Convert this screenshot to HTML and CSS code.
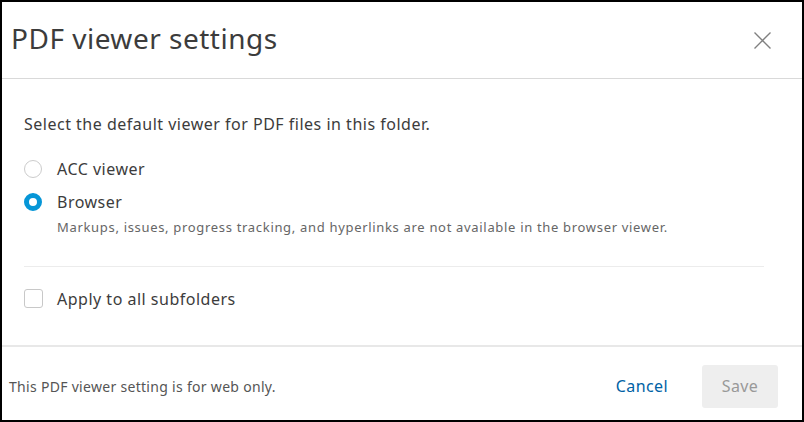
FILE: index.html
```html
<!DOCTYPE html>
<html>
<head>
<meta charset="utf-8">
<link rel="stylesheet" href="styles.css">
</head>
<body>
<div class="dialog">
  <div class="header">
    <h1 class="title">PDF viewer settings</h1>
    <button class="close" aria-label="Close">
      <svg width="17" height="17" viewBox="0 0 17 17"><path d="M0.5 0.5 L16.5 16.5 M16.5 0.5 L0.5 16.5" stroke="#808080" stroke-width="1.4" fill="none"/></svg>
    </button>
  </div>
  <div class="body">
    <p class="intro">Select the default viewer for PDF files in this folder.</p>
    <div class="options">
      <label class="option">
        <span class="radio"></span>
        <span class="opt-label">ACC viewer</span>
      </label>
      <label class="option">
        <span class="radio checked"></span>
        <span class="opt-text">
          <span class="opt-label">Browser</span>
          <span class="opt-desc">Markups, issues, progress tracking, and hyperlinks are not available in the browser viewer.</span>
        </span>
      </label>
    </div>
    <div class="divider"></div>
    <label class="option check-row">
      <span class="checkbox"></span>
      <span class="opt-label">Apply to all subfolders</span>
    </label>
  </div>
  <div class="footer">
    <span class="note">This PDF viewer setting is for web only.</span>
    <div class="actions">
      <button class="btn-cancel">Cancel</button>
      <button class="btn-save">Save</button>
    </div>
  </div>
</div>
</body>
</html>
```

FILE: styles.css
```css
* { box-sizing: border-box; }
html, body { margin: 0; padding: 0; background: #fff; }
body { font-family: "Noto Sans", "Open Sans", sans-serif; color: #3c3c3c; }

.dialog {
  width: 804px;
  height: 422px;
  border: 2px solid #000;
  display: flex;
  flex-direction: column;
  background: #fff;
}

.header {
  height: 77px;
  border-bottom: 1px solid #d9d9d9;
  display: flex;
  align-items: center;
  justify-content: space-between;
  padding: 0 31px 0 9px;
}
.title {
  margin: 0;
  font-weight: 400;
  font-size: 28px;
  letter-spacing: 0.5px;
  color: #3c3c3c;
  padding-bottom: 4px;
}
.close {
  border: 0;
  background: none;
  padding: 0;
  width: 17px;
  height: 17px;
  display: flex;
}

.body {
  flex: 1;
  padding: 34px 38px 0 22px;
}
.intro {
  margin: 0 0 23px;
  font-size: 16px;
  line-height: 22px;
  letter-spacing: 0.5px;
}
.options { display: flex; flex-direction: column; gap: 11px; }
.option {
  display: flex;
  align-items: flex-start;
  gap: 15px;
}
.check-row { gap: 14px; }
.opt-text { display: flex; flex-direction: column; }
.opt-label { font-size: 16px; line-height: 22px; color: #3c3c3c; letter-spacing: 0.5px; }
.opt-desc { font-size: 13px; line-height: 20px; color: #666; margin-top: 4px; letter-spacing: 0.68px; }

.radio {
  width: 18px;
  height: 18px;
  margin-top: 2px;
  border-radius: 50%;
  border: 1px solid #cccccc;
  flex: none;
}
.radio.checked { border: 5px solid #0696d7; }

.divider {
  height: 1px;
  background: #ececec;
  margin: 29px 0 21px;
}

.checkbox {
  width: 19px;
  height: 19px;
  margin-top: 1px;
  border: 1px solid #c8c8c8;
  border-radius: 3px;
  flex: none;
}

.footer {
  height: 75px;
  border-top: 2px solid #e8e8e8;
  display: flex;
  align-items: center;
  justify-content: space-between;
  padding: 5px 24px 0 7px;
}
.note { font-size: 14px; color: #555; letter-spacing: 0.3px; }
.actions { display: flex; align-items: center; gap: 34px; }
.btn-cancel {
  border: 0;
  background: none;
  font-family: inherit;
  font-size: 16px;
  letter-spacing: 0.4px;
  color: #0062a5;
  padding: 0;
}
.btn-save {
  border: 0;
  background: #eeeeee;
  border-radius: 3px;
  width: 76px;
  height: 43px;
  font-family: inherit;
  font-size: 16px;
  letter-spacing: 0.4px;
  color: #999;
}
```
